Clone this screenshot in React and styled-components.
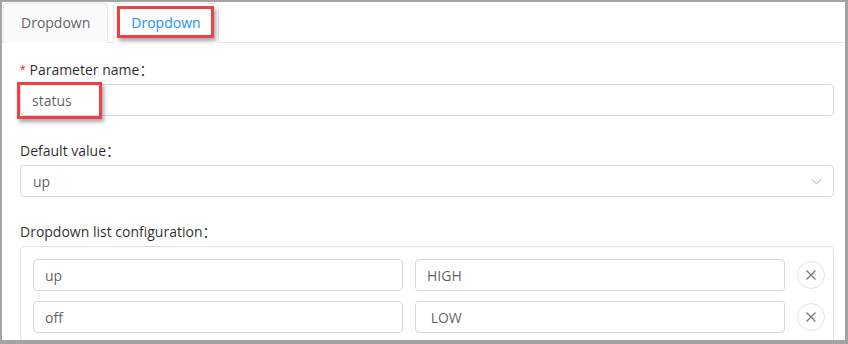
import React from "react";
import styled, { createGlobalStyle } from "styled-components";

const Global = createGlobalStyle`
  html, body {
    margin: 0;
    padding: 0;
    background: #ffffff;
  }
  * {
    box-sizing: border-box;
  }
`;

const rows = [
  { key: "up", value: "HIGH" },
  { key: "off", value: " LOW" },
];

const App = () => {
  return (
    <Frame>
      <Global />
      <TabBar>
        <Tab>Dropdown</Tab>
        <Tab active>
          Dropdown
          <Mark className="mark--tab" />
        </Tab>
      </TabBar>
      <Form>
        <Item>
          <Label>
            <Required>*</Required>Parameter name：
          </Label>
          <Field>
            <Input defaultValue="status" readOnly />
            <Mark className="mark--input" />
          </Field>
        </Item>
        <Item>
          <Label>Default value：</Label>
          <Select>
            <span>up</span>
            <svg width="11" height="11" viewBox="0 0 12 12">
              <path d="M1 3.8 L6 8.6 L11 3.8" fill="none" stroke="#bfbfbf" strokeWidth="1.1" />
            </svg>
          </Select>
        </Item>
        <Item>
          <Label>Dropdown list configuration：</Label>
          <ListBox>
            {rows.map((r) => (
              <Row key={r.key}>
                <Input defaultValue={r.key} readOnly />
                <Input defaultValue={r.value} readOnly />
                <RemoveButton>
                  <svg width="12" height="12" viewBox="0 0 12 12">
                    <path d="M1.5 1.5 L10.5 10.5 M10.5 1.5 L1.5 10.5" stroke="#707070" strokeWidth="1.1" fill="none" />
                  </svg>
                </RemoveButton>
              </Row>
            ))}
          </ListBox>
        </Item>
      </Form>
    </Frame>
  );
};

const Frame = styled.div`
  width: 848px;
  height: 344px;
  overflow: hidden;
  border-style: solid;
  border-color: #a3a3a3;
  border-width: 2px 3px 4px 2px;
  font-family: "Open Sans", "Noto Sans CJK SC", sans-serif;
  font-size: 14px;
  background: #fff;
`;

const TabBar = styled.div`
  display: flex;
  gap: 5px;
  padding: 1px 0 0 1px;
  height: 41px;
  border-bottom: 1px solid #e8e8e8;
`;

const Tab = styled.div`
  position: relative;
  height: 40px;
  padding: 0 17px;
  display: flex;
  align-items: center;
  line-height: 22px;
  border: 1px solid #e8e8e8;
  border-bottom: ${(p) => (p.active ? "1px solid #fff" : "none")};
  border-radius: 4px 4px 0 0;
  background: ${(p) => (p.active ? "#fff" : "#fafafa")};
  color: ${(p) => (p.active ? "#1890ff" : "rgba(0, 0, 0, 0.65)")};
  padding-bottom: 1px;
`;

const Mark = styled.div`
  position: absolute;
  border: 3px solid #ef4046;
  box-shadow: 2px 3px 4px rgba(0, 0, 0, 0.35);
  pointer-events: none;
  &.mark--tab {
    left: 3px;
    top: 2px;
    width: 97px;
    height: 32px;
  }
  &.mark--input {
    left: -3px;
    top: -2px;
    width: 85px;
    height: 37px;
  }
`;

const Form = styled.div`
  padding: 16px 11px 0 18px;
  display: flex;
  flex-direction: column;
  gap: 24px;
`;

const Item = styled.div`
  display: flex;
  flex-direction: column;
`;

const Label = styled.label`
  line-height: 22px;
  margin-bottom: 3px;
  color: rgba(0, 0, 0, 0.85);
`;

const Required = styled.span`
  color: #f5222d;
  margin-right: 4px;
  font-family: SimSun, "Liberation Sans", sans-serif;
  font-size: 14px;
`;

const Field = styled.div`
  position: relative;
`;

const Input = styled.input`
  width: 100%;
  height: 32px;
  padding: 4px 11px;
  border: 1px solid #d9d9d9;
  border-radius: 4px;
  font: inherit;
  color: rgba(0, 0, 0, 0.65);
  background: #fff;
  outline: none;
  white-space: pre;
`;

const Select = styled.div`
  height: 32px;
  padding: 0 11px 0 12px;
  border: 1px solid #d9d9d9;
  border-radius: 4px;
  display: flex;
  align-items: center;
  justify-content: space-between;
  color: rgba(0, 0, 0, 0.65);
`;

const ListBox = styled.div`
  border: 1px solid #e1e1e1;
  border-radius: 4px;
  padding: 12px 8px 12px 12px;
  display: flex;
  flex-direction: column;
  gap: 10px;
`;

const Row = styled.div`
  display: grid;
  grid-template-columns: 1fr 1fr 28px;
  gap: 12px;
  align-items: center;
`;

const RemoveButton = styled.button`
  width: 28px;
  height: 28px;
  border-radius: 50%;
  border: 1px solid #e3e3e3;
  background: #fff;
  padding: 0;
  display: flex;
  align-items: center;
  justify-content: center;
`;

export default App;
